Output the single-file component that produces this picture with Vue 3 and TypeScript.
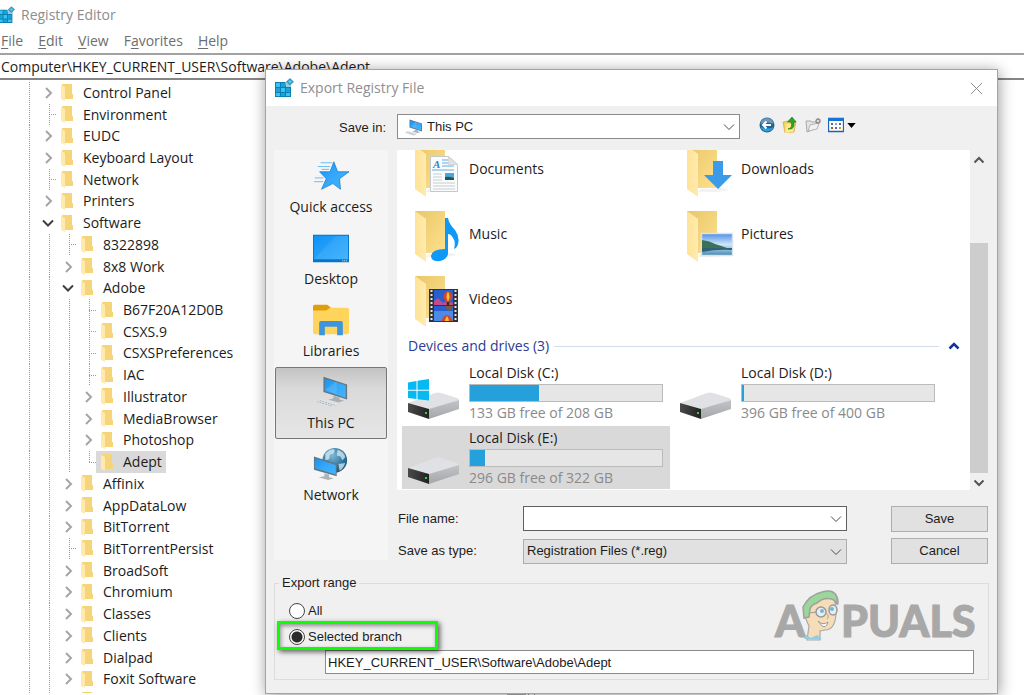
<script setup lang="ts">
import { ref } from 'vue'

type NodeState = 'leaf' | 'last' | 'closed' | 'open'
interface TreeNode { name: string; depth: number; state: NodeState }
interface Drive { name: string; free: string; used: number; system: boolean; selected: boolean }

const menus = ['File', 'Edit', 'View', 'Favorites', 'Help']
const accessKey: Record<string, number> = { Favorites: 1 }

const n = (name: string, depth: number, state: NodeState = 'closed'): TreeNode => ({ name, depth, state })
const nodes: TreeNode[] = [
  n('Control Panel', 1), n('Environment', 1, 'leaf'), n('EUDC', 1), n('Keyboard Layout', 1),
  n('Network', 1, 'leaf'), n('Printers', 1), n('Software', 1, 'open'),
  n('8322898', 2, 'leaf'), n('8x8 Work', 2), n('Adobe', 2, 'open'),
  n('B67F20A12D0B', 3, 'leaf'), n('CSXS.9', 3, 'leaf'), n('CSXSPreferences', 3, 'leaf'), n('IAC', 3, 'leaf'),
  n('Illustrator', 3), n('MediaBrowser', 3), n('Photoshop', 3), n('Adept', 3, 'last'),
  n('Affinix', 2), n('AppDataLow', 2), n('BitTorrent', 2), n('BitTorrentPersist', 2, 'leaf'),
  n('BroadSoft', 2), n('Chromium', 2), n('Classes', 2), n('Clients', 2), n('Dialpad', 2),
  n('Foxit Software', 2), n('', 2),
]

const places = ['Quick access', 'Desktop', 'Libraries', 'This PC', 'Network']
const activePlace = ref('This PC')
const folders = ['Documents', 'Downloads', 'Music', 'Pictures', 'Videos']
const drives: Drive[] = [
  { name: 'Local Disk (C:)', free: '133 GB free of 208 GB', used: 36, system: true, selected: false },
  { name: 'Local Disk (D:)', free: '396 GB free of 400 GB', used: 1, system: false, selected: false },
  { name: 'Local Disk (E:)', free: '296 GB free of 322 GB', used: 8, system: false, selected: true },
]

const range = ref('branch')
const fileName = ref('')
const branch = ref('HKEY_CURRENT_USER\\Software\\Adobe\\Adept')
const address = ref('Computer\\HKEY_CURRENT_USER\\Software\\Adobe\\Adept')
</script>

<template>
  <div class="editor">
    <svg class="defs" width="0" height="0" aria-hidden="true">
      <defs>
        <linearGradient id="back" x1="0" y1="0" x2="1" y2="1"><stop offset="0" stop-color="#e8c76b" /><stop offset="1" stop-color="#ffe08a" /></linearGradient>
        <linearGradient id="flap" x1="0" y1="0" x2="1" y2="0"><stop offset="0" stop-color="#ffe296" /><stop offset="1" stop-color="#ffebb0" /></linearGradient>
        <linearGradient id="blue" x1="0" y1="0" x2="1" y2="1"><stop offset="0" stop-color="#1593f4" /><stop offset=".5" stop-color="#35a8fb" /><stop offset="1" stop-color="#45b4fc" /></linearGradient>
        <linearGradient id="sky" x1="0" y1="0" x2="0" y2="1"><stop offset="0" stop-color="#4c8fe8" /><stop offset=".5" stop-color="#cfe5f8" /><stop offset=".75" stop-color="#8dbbd8" /><stop offset="1" stop-color="#4182ab" /></linearGradient>
        <radialGradient id="globe" cx=".4" cy=".3" r=".8"><stop offset="0" stop-color="#7fb9d6" /><stop offset=".6" stop-color="#32779f" /><stop offset="1" stop-color="#164d70" /></radialGradient>
        <linearGradient id="front" x1="0" y1="0" x2="1" y2="0"><stop offset="0" stop-color="#4a4a4a" /><stop offset="1" stop-color="#222" /></linearGradient>
        <linearGradient id="side" x1="0" y1="0" x2="0" y2="1"><stop offset="0" stop-color="#c2c4c7" /><stop offset="1" stop-color="#a4a6a9" /></linearGradient>
        <symbol id="registry" viewBox="0 0 20 20">
          <path d="M1 4h16v15H1z" fill="#0c7fb2" />
          <path d="M2 5h4v4H2zM7 10h4v4H7zM2 15h4v3H2zM12 15h4v3h-4z" fill="#38c3f2" />
          <path d="M7 5h4v4H7zM2 10h4v4H2zM7 15h4v3H7zM12 10h4v4h-4z" fill="#1aa3da" />
          <path d="M11 3h3v3h3v3h-5z" fill="#fff" opacity=".6" />
          <path d="M16 0l4 3.800-4 3.800-4-3.800z" fill="#3a9dc4" /><path d="M16 2l2 1.800-2 1.800-2-1.800z" fill="#65c4e6" />
        </symbol>
        <symbol id="pc" viewBox="0 0 38 34">
          <path d="M11 1l25 8v16L11 17z" fill="#65757f" /><path d="M12.500 3l22 7v13L12.500 16z" fill="url(#blue)" />
          <path d="M25 5v14l-12-4z" fill="#fff" opacity=".12" />
          <path d="M22 21l6 2v2l5 1-6 2-11-3 5-1z" fill="#a7b0b6" />
          <path d="M1 27l7-3 19 5.500-7 4z" fill="#dfe3e5" /><path d="M4 27l16 5M7 26l16 5" stroke="#98a2a8" stroke-width=".8" stroke-dasharray="2 1" />
        </symbol>
      </defs>
    </svg>

    <header class="titlebar">
      <svg class="app-icon" viewBox="3 0 17 20"><use href="#registry" width="20" height="20" /></svg>
      <span>Registry Editor</span>
    </header>
    <nav class="menu">
      <button v-for="m in menus" :key="m" type="button">{{ m.slice(0, accessKey[m] ?? 0) }}<u>{{ m.charAt(accessKey[m] ?? 0) }}</u>{{ m.slice((accessKey[m] ?? 0) + 1) }}</button>
    </nav>
    <input v-model="address" class="address" aria-label="Registry path" />

    <ul class="tree">
      <li v-for="node in nodes" :key="node.name">
        <span v-for="d in node.depth" :key="d" class="guide"></span>
        <span class="branch" :class="node.state">
          <svg v-if="node.state === 'closed'" viewBox="0 0 16 16"><path d="M6 3l5 5-5 5" /></svg>
          <svg v-else-if="node.state === 'open'" viewBox="0 0 16 16"><path d="M3 5.500l5 5 5-5" /></svg>
        </span>
        <span class="node" :class="{ picked: node.name === 'Adept' }">
          <svg class="small-folder" viewBox="0 0 12 17"><path d="M1 0h10v10h1v5H3z" fill="#f6d57a" /><path d="M0 1l4 2v14l-4-2z" fill="#ffe9ab" /></svg>
          <span v-if="node.name">{{ node.name }}</span>
        </span>
      </li>
    </ul>
    <footer class="strip"><span class="strip-thumb"></span><span class="splitter"></span></footer>

    <section class="dialog" role="dialog" aria-labelledby="dlg-title">
      <header class="dlg-head">
        <svg class="dlg-icon" viewBox="0 0 20 20"><use href="#registry" /></svg>
        <h1 id="dlg-title">Export Registry File</h1>
        <button type="button" class="close" aria-label="Close"><svg viewBox="0 0 14 14"><path d="M1 1l12 12M13 1L1 13" /></svg></button>
      </header>

      <div class="dlg-body">
        <label class="save-in" for="location">Save in:</label>
        <div class="location-row">
          <div class="combo location">
            <svg class="combo-icon" viewBox="0 0 38 34"><use href="#pc" /></svg>
            <select id="location"><option>This PC</option></select>
            <svg class="arrow" viewBox="0 0 12 8"><path d="M1 1.500l5 5 5-5" /></svg>
          </div>
          <div class="tools">
            <button type="button" aria-label="Back">
              <svg viewBox="0 0 16 16"><circle cx="8" cy="8" r="7.500" fill="#23618f" /><path d="M1.500 7a6.500 6 0 0 1 13 0q-6-3-13 0z" fill="#7097b5" /><path d="M1.500 10a7 7 0 0 0 13 0q-5 3-13 0z" fill="#2da0e0" /><path d="M7.500 4.500L4 8l3.500 3.500M4.500 8H12" fill="none" stroke="#fff" stroke-width="2" /></svg>
            </button>
            <button type="button" aria-label="Up one level">
              <svg viewBox="0 0 16 16"><path d="M1 5l5-1 1 1 7-1-2 11-9 1z" fill="#f3d35e" stroke="#cba73b" stroke-width=".7" /><path d="M4 7l9-1-2 9-8 1z" fill="#ffe88d" /><path d="M6 12q5-1 3-7H5.500L10 0l4 5h-2q1 8-6 7z" fill="#2fa32d" stroke="#16761a" stroke-width=".6" /></svg>
            </button>
            <button type="button" aria-label="New folder">
              <svg viewBox="0 0 16 16"><path d="M1 4h5l1 1h5v6L2 15z" fill="#e3e3e3" stroke="#aaa" /><path d="M3 14l2-6 9-2-2 6z" fill="#f2f2f2" stroke="#b5b5b5" /><circle cx="13" cy="4" r="2" fill="#ddd" stroke="#888" stroke-width="1.300" /></svg>
            </button>
            <button type="button" class="views" aria-label="View menu">
              <svg class="view-icon" viewBox="0 0 16 16"><path d="M.5 1.500h15v13H.5z" fill="#fff" stroke="#1c62b5" stroke-width="1.300" /><path d="M0 1h16v3H0z" fill="#1874d1" /><path d="M3 6h2v2H3zM11 6h2v2h-2zM7 10h2v2H7z" fill="#4a64b8" /><path d="M7 6h2v2H7z" fill="#72a9d8" /><path d="M3 10h2v2H3z" fill="#bd4936" /><path d="M11 10h2v2h-2z" fill="#c79e35" /></svg>
              <svg class="caret" viewBox="0 0 10 6"><path d="M0 0h10L5 6z" /></svg>
            </button>
          </div>
        </div>

        <nav class="places">
          <button v-for="p in places" :key="p" type="button" :class="{ active: p === activePlace }" @click="activePlace = p">
            <svg viewBox="0 0 38 34">
              <template v-if="p === 'Quick access'">
                <path d="M22 2l4 10.500h12l-10 7.500 1 11-8-6-12 6 5-11-7-7.500h11z" fill="url(#blue)" stroke="#167fd2" stroke-width=".8" />
                <path d="M8 3h12M5 7h13M9 10h8M2 19h9M1 23h10" stroke="#6bb9ef" stroke-width="1" />
              </template>
              <template v-else-if="p === 'Desktop'">
                <path d="M0 3h38v29H0z" fill="#0774cc" /><path d="M1 4h36v25H1z" fill="url(#blue)" /><path d="M1 29L24 4H1z" fill="#0793fa" opacity=".35" /><path d="M31 30.500h1m1 0h1m1 0h1" stroke="#fff" />
              </template>
              <template v-else-if="p === 'Libraries'">
                <path d="M0 3q0-2 2-2h13l4 3-4 4H0z" fill="#e09d0a" /><path d="M0 7h14l4-3h18q2 0 2 2v24q0 2-2 2H2q-2 0-2-2z" fill="#ffd45d" /><path d="M6.500 33V20q0-2 2-2h21q2 0 2 2v13h-6v-9h-13v9z" fill="#3e95dc" />
              </template>
              <use v-else-if="p === 'This PC'" href="#pc" />
              <template v-else>
                <circle cx="23" cy="13" r="13" fill="url(#globe)" /><path d="M13 6q6-6 10-4l-1 4-4 1-1 5-4 1zM26 2q7 2 8 8l-3 3-2-4-4-1zM27 17l7-1q-2 6-6 8z" fill="#d5edf5" opacity=".75" />
                <path d="M1 9l24 8v13L1 23z" fill="#65757f" /><path d="M2 11l22 7v10L2 21.500z" fill="url(#blue)" /><path d="M12 27l5 1v3l5 1-6 2-10-3 6-1z" fill="#abb4b9" />
              </template>
            </svg>
            <span>{{ p }}</span>
          </button>
        </nav>

        <div class="browser">
          <div class="scroll-area">
            <div class="cells folders">
              <button v-for="f in folders" :key="f" type="button" class="folder">
                <svg viewBox="0 0 48 52">
                  <path d="M11 47l4-3h17v-2l12 3-12 2z" fill="#000" opacity=".05" />
                  <path d="M1 1h30v42H9z" fill="url(#back)" /><path d="M1 1l11 8v43L1 44z" fill="url(#flap)" />
                  <template v-if="f === 'Documents'">
                    <path d="M16.500 11.500h18l9 8v27h-27z" fill="#fbfcfd" stroke="#c3c8cc" /><path d="M34.500 11.500v8h9z" fill="#dfe3e6" stroke="#c3c8cc" stroke-width=".6" />
                    <text x="19" y="23" class="letter">A</text>
                    <path d="M18 25h22M28 15h6M28 18h6M28 21h12" stroke="#3a9ad9" stroke-width=".8" /><path d="M19 29h9M19 32h9M19 35h9M19 38h22M19 41h22M19 44h22" stroke="#bcc2c7" stroke-width=".8" /><path d="M31 28h9v7h-9z" fill="#4aa6df" /><path d="M31 32q4-1 9 1v2h-9z" fill="#24584e" />
                  </template>
                  <path v-else-if="f === 'Downloads'" d="M27 16h10v14h9L32 44 18 30h9z" fill="#3c9be8" />
                  <template v-else-if="f === 'Music'"><path d="M31 8h3q1 6 7 12 5 7 3 14-1 4-4 5 2-7-1-11-2-4-5-4v19q0 6-8 8-9 1-9-5 1-7 14-7z" fill="#0e98f8" /></template>
                  <template v-else-if="f === 'Pictures'">
                    <path d="M15.500 23.500h31v22h-31z" fill="url(#sky)" stroke="#d8e4ec" stroke-width="1.400" /><path d="M16 30q8 1 13 4 7 2 12 4H16z" fill="#3d7157" /><path d="M16 38h30v2q-14-1-30 2z" fill="#2e6277" />
                  </template>
                  <template v-else>
                    <path d="M15 14h29v33H15z" fill="#30343a" /><path d="M20 15h19v15H20zM20 31h19v15H20z" fill="#285fd0" /><path d="M20 36h19v10H20z" fill="#4b8ae6" />
                    <path d="M20 26l4-3 5 5 4-2 6 2v2H20z" fill="#c34a8c" /><ellipse cx="34" cy="21.500" rx="4.500" ry="5" fill="#d8432d" /><path d="M34 16.500q-3 5 0 10 3-5 0-10z" fill="#f0c431" /><path d="M32.500 27h3l-.5 3h-2z" fill="#3d2a1d" />
                    <path d="M31 31q4 9 8 0z" fill="#7a5b35" /><path d="M27 46q6-12 12 0z" fill="#d8432d" /><path d="M31 46q2-9 4 0z" fill="#f0c431" />
                    <path d="M17.500 15v31M41.500 15v31" stroke="#e6e6e6" stroke-width="2" stroke-dasharray="2 2" />
                  </template>
                </svg>
                <span>{{ f }}</span>
              </button>
            </div>
            <h2 class="group"><span>Devices and drives (3)</span><i></i><svg viewBox="0 0 12 8"><path d="M1.500 6.500L6 2l4.500 4.500" /></svg></h2>
            <div class="cells">
              <button v-for="d in drives" :key="d.name" type="button" class="drive" :class="{ chosen: d.selected }">
                <svg viewBox="0 0 52 42">
                  <path d="M0 25l27-10q3-1 6 0l16 5q2 1 2 2L21 32z" fill="#dfe1e4" /><path d="M21 31l30-9v9L21 41z" fill="url(#side)" /><path d="M0 25l21 6v10L0 34z" fill="url(#front)" /><path d="M17 34h2v2h-2z" fill="#36d040" />
                  <path v-if="d.system" d="M0 4.500L8.500 3v8.700H0zM9.500 2.800L21 1v10.700H9.500zM0 12.700h8.500V21L0 20zM9.500 12.700H21V22.500l-11.500-1.300z" fill="#05b9f2" />
                </svg>
                <span class="drive-info">
                  <span class="drive-name">{{ d.name }}</span>
                  <span class="meter"><span class="used" :style="{ width: d.used + '%' }"></span></span>
                  <span class="free">{{ d.free }}</span>
                </span>
              </button>
            </div>
          </div>
          <div class="scrollbar">
            <svg viewBox="0 0 12 8"><path d="M1.500 6.500L6 2l4.500 4.500" /></svg>
            <span class="thumb"></span>
            <svg viewBox="0 0 12 8"><path d="M1.500 1.500L6 6l4.500-4.500" /></svg>
          </div>
        </div>

        <form class="fields" @submit.prevent>
          <label for="fname">File name:</label>
          <div class="combo name"><input id="fname" v-model="fileName" /><svg class="arrow" viewBox="0 0 12 8"><path d="M1 1.500l5 5 5-5" /></svg></div>
          <button type="submit">Save</button>
          <label for="ftype">Save as type:</label>
          <div class="combo type"><select id="ftype"><option>Registration Files (*.reg)</option></select><svg class="arrow" viewBox="0 0 12 8"><path d="M1 1.500l5 5 5-5" /></svg></div>
          <button type="button">Cancel</button>
        </form>
      </div>

      <fieldset class="range">
        <legend>Export range</legend>
        <label class="option"><input v-model="range" type="radio" name="range" value="all" />All</label>
        <div class="marked"><label class="option"><input v-model="range" type="radio" name="range" value="branch" />Selected branch</label><span class="marker"></span></div>
        <input v-model="branch" class="path" aria-label="Selected branch path" />
        <svg class="brand" viewBox="0 0 206 52" role="img" aria-label="Appuals">
          <text x="1" y="48">A</text><text x="67" y="48">PUALS</text>
          <path d="M31 28l-1-9q3-9 16-14 11-5 16 1 3 4 2 9l-3-2 1 12q-1 16-11 16l-5 1v9H33l2-14z" fill="#f5ddb9" stroke="#aaa" stroke-width="1.200" />
          <path d="M35 18q9-9 21-8l5 2v-5q-8-3-20 4-6 3-6 7z" fill="#eeb08e" />
          <path d="M29 18q6-12 19-15 10-3 14 3 2 4 1 9l-3-4q-9-4-17 3-6 2-7 6l-1 8-5 1z" fill="#9bd69a" stroke="#a0a0a0" stroke-width="1.500" />
          <path d="M30 50l2-4 5 3 6-3 5 4z" fill="#91cce3" /><circle cx="47" cy="23" r="5" fill="#e7eef1" stroke="#999" stroke-width="1.500" /><ellipse cx="59" cy="21" rx="4" ry="5" fill="#e7eef1" stroke="#999" stroke-width="1.500" /><circle cx="48" cy="22" r="2" fill="#6fb9d6" /><circle cx="58" cy="20" r="2" fill="#6fb9d6" /><path d="M42 23l-6 1M44 32q5 5 10 1-2 7-6 4z" fill="#fff" stroke="#999" /><path d="M52 24q4 3 1 6" fill="none" stroke="#b89c7d" />
        </svg>
      </fieldset>
    </section>
  </div>
</template>

<style>
html, body { margin: 0; background: #fff; }
</style>

<style scoped>
* { box-sizing: border-box; }
.editor { position: relative; height: 100vh; min-height: 695px; display: flex; flex-direction: column; overflow: hidden; background: #fff; color: #1c1c1c; font: 14px/18px "Open Sans", "Noto Sans", sans-serif; }
.defs { position: absolute; }
button, input, select { font: inherit; color: inherit; margin: 0; padding: 0; border: 0; background: none; border-radius: 0; outline: 0; }
svg { display: block; flex: none; }

.titlebar { display: flex; align-items: center; gap: 6px; height: 29px; color: #8d8d8d; }
.app-icon { width: 15px; height: 20px; }
.menu { display: flex; gap: 15px; height: 24px; padding-left: 1px; color: #6e6e6e; }
.menu u { text-underline-offset: 2px; }
.address { height: 27px; width: 100%; border-top: 2px solid #a2a2a2; border-bottom: 2px solid #858585; padding-left: 1px; }

.tree { flex: 1; min-height: 0; margin: 2px 0 -19px; padding: 0 0 0 19px; list-style: none; display: flex; flex-direction: column; }
.tree li { flex: 1; min-height: 0; display: flex; align-items: stretch; }
.guide { width: 20px; background: repeating-linear-gradient(#999 0 1px, transparent 1px 2px) 10px 0 / 1px 100% no-repeat; }
.branch { position: relative; width: 17px; display: flex; align-items: center; }
.branch svg { width: 16px; height: 16px; margin-left: 1px; fill: none; stroke: #a5a5a5; stroke-width: 2; }
.branch.open svg { stroke: #404040; }
.branch.leaf { background: repeating-linear-gradient(#999 0 1px, transparent 1px 2px) 10px 0 / 1px 100% no-repeat, repeating-linear-gradient(90deg, #999 0 1px, transparent 1px 2px) 10px 50% / 8px 1px no-repeat; }
.branch.last { background: repeating-linear-gradient(#999 0 1px, transparent 1px 2px) 10px 0 / 1px 50% no-repeat, repeating-linear-gradient(90deg, #999 0 1px, transparent 1px 2px) 10px 50% / 8px 1px no-repeat; }
.node { display: flex; align-items: center; gap: 10px; padding: 0 4px 0 5px; white-space: nowrap; }
.picked { background: #d9d9d9; }
.small-folder { width: 12px; height: 17px; }
.strip { position: relative; height: 2px; display: flex; gap: 2px; padding-left: 507px; background: #fff; }
.strip-thumb { width: 19px; background: #b5b5b5; }
.splitter { width: 7px; border: solid #999; border-width: 0 1px; }

.dialog { position: absolute; top: 69px; left: 265px; right: 26px; background: #f0f0f0; border: 1px solid #a3a3a3; box-shadow: 1px 2px 14px rgba(0, 0, 0, .4); }
.dlg-head { display: flex; align-items: center; height: 36px; padding: 0 14px 0 8px; background: #fff; color: #8f8f8f; }
.dlg-icon { width: 20px; height: 20px; }
h1 { flex: 1; margin: 0 0 0 6px; font: inherit; }
.close svg { width: 13px; height: 13px; fill: none; stroke: #858585; }
.dlg-body { display: grid; grid-template-columns: 114px minmax(0, 1fr); grid-template-rows: 44px auto auto; column-gap: 9px; padding: 0 9px 0 8px; }
.save-in, .combo, .fields, .range { font: 13px/18px "Liberation Sans", Arial, sans-serif; }
.save-in { padding: 13px 2px 0 0; text-align: right; }
.location-row { display: flex; align-items: flex-start; padding-top: 8px; gap: 19px; }
.combo { position: relative; height: 25px; border: 1px solid #8a8a8a; background: #fff; }
.combo select, .combo input { appearance: none; width: 100%; height: 100%; padding: 0 24px 0 3px; }
.combo .arrow { position: absolute; right: 4px; top: 8px; width: 12px; height: 8px; pointer-events: none; fill: none; stroke: #4c4c4c; stroke-width: 1; }
.location { flex: 0 0 58%; }
.location select { padding-left: 29px; }
.combo-icon { position: absolute; left: 6px; top: 4px; width: 19px; height: 17px; pointer-events: none; }
.tools { display: flex; gap: 7px; padding-top: 3px; }
.tools svg { width: 16px; height: 16px; }
.tools .views { display: flex; align-items: center; gap: 3px; }
.tools .caret { width: 9px; height: 5px; }

.places { grid-row: 2 / 4; margin-bottom: 4px; padding: 1px 1px 0; background: #f5f5f5; }
.places button { width: 100%; height: 72px; padding-top: 7px; display: flex; flex-direction: column; align-items: center; gap: 5px; border: 1px solid transparent; }
.places svg { width: 36px; height: 34px; }
.places .active { border: 1px solid #777; border-radius: 2px; background: linear-gradient(#c3c3c3, #dadada 30%, #e6e6e6); }

.browser { display: flex; height: 340px; overflow: hidden; }
.scroll-area { flex: 1; padding-left: 5px; background: #fff; overflow: hidden; }
.cells { display: grid; grid-template-columns: 1fr 1fr; column-gap: 4px; margin-right: 28px; }
.folders { margin-top: -14px; }
.folder { display: flex; align-items: center; gap: 7px; height: 65px; padding-left: 12px; text-align: left; }
.folder svg { width: 48px; height: 52px; margin-top: 4px; }
.letter { font: italic bold 11px "Liberation Serif", serif; fill: #2b86c9; }
.group { display: flex; align-items: center; gap: 5px; height: 30px; margin: 0 10px 0 6px; font: inherit; color: #2b3c93; }
.group i { flex: 1; height: 1px; background: #d4dcec; margin-right: 4px; }
.group svg { width: 12px; height: 8px; fill: none; stroke: #10349a; stroke-width: 2.500; }
.drive { display: flex; align-items: flex-start; gap: 9px; height: 65px; padding: 3px 7px 0 6px; text-align: left; }
.drive svg { width: 52px; height: 42px; margin-top: 14px; }
.drive-info { flex: 1; display: flex; flex-direction: column; gap: 2px; }
.meter { height: 18px; border: 1px solid #bbb; background: #e6e6e6; display: flex; }
.used { background: #26a0da; }
.free { color: #8a8a8a; }
.chosen { height: 63px; background: #d9d9d9; }
.scrollbar { width: 18px; display: flex; flex-direction: column; align-items: center; padding: 6px 0 3px; }
.scrollbar svg { width: 12px; height: 8px; fill: none; stroke: #555; stroke-width: 2; }
.thumb { flex: 1; width: 100%; margin: 79px 0 6px; background: #cdcdcd; }

.fields { display: grid; grid-template-columns: 125px minmax(0, 1fr) 97px; grid-auto-rows: 26px; row-gap: 6px; align-items: center; padding: 16px 0 0 1px; }
.fields button { height: 26px; border: 1px solid #adadad; background: #e1e1e1; }
.fields .combo { margin-right: 44px; }
.fields .name { border-color: #5f5f5f; align-self: start; }
.fields .type { background: #e1e1e1; border-color: #adadad; }

.range { position: relative; margin: 11px 8px 13px; padding: 7px 14px 5px; border: 1px solid #dcdcdc; min-width: 0; }
.range legend { margin-left: -10px; padding: 0 3px; height: 16px; line-height: 16px; }
.option { display: flex; align-items: center; gap: 3px; height: 26px; width: max-content; }
.option input { appearance: none; width: 16px; height: 16px; border: 1px solid #444; border-radius: 50%; background: #fff; }
.option input:checked { background: radial-gradient(circle, #2b2b2b 0 5px, #fff 6px); }
.marked { position: relative; width: max-content; }
.marker { position: absolute; inset: -3px -36px 0 -12px; border: 3px solid #0bff00; box-shadow: 2px 2px 5px rgba(0, 0, 0, .6), inset 1px 2px 4px rgba(0, 0, 0, .4); pointer-events: none; }
.range .path { display: block; width: calc(100% - 36px); margin-left: 36px; height: 24px; padding: 0 2px; border: 1px solid #8b8b8b; background: #fff; }
.brand { position: absolute; right: 8px; top: -2px; width: 206px; height: 52px; overflow: visible; }
.brand text { font: 900 43px Lato, sans-serif; fill: #a8a8a8; stroke: #a8a8a8; stroke-width: 1; stroke-linejoin: round; }
</style>
